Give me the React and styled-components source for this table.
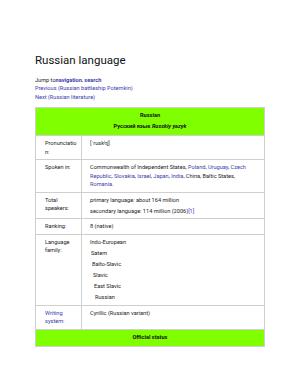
import React from 'react';
import styled, { createGlobalStyle } from 'styled-components';

const Global = createGlobalStyle`
    html, body { margin: 0; padding: 0; background: #fff; }
    body { font-family: Roboto, "Liberation Sans", sans-serif; color: #222; }
`;

const Page = styled.div`
    padding: 52px 35px 0 35px;
    width: 230px;
`;

const Title = styled.h1`
    font-size: 11.5px;
    font-weight: 400;
    line-height: 16px;
    margin: 0 0 9px 0;
    color: #111;
`;

const Small = styled.div`
    font-size: 5.6px;
    line-height: 7px;
    margin-bottom: ${p => p.$gap || 0}px;
`;

const A = styled.span`
    color: #3a3aad;
    font-weight: ${p => p.$bold ? 700 : 400};
`;

const Table = styled.div`
    margin-top: 6px;
    border: 1px solid #cfcfcf;
    font-size: 5.6px;
    line-height: 8.25px;
`;

const Head = styled.div`
    background: #80ff00;
    text-align: center;
    font-weight: 700;
    padding: 3px 4px 5px;
    display: flex;
    flex-direction: column;
    gap: 2.75px;
    color: #111;
    border-top: ${p => p.$ruled ? '1px solid #cfcfcf' : 'none'};
`;

const Row = styled.div`
    display: grid;
    grid-template-columns: 46px 1fr;
    border-top: 1px solid #cfcfcf;
`;

const Label = styled.div`
    padding: 3px 2px 3.5px 9px;
    border-right: 1px solid #cfcfcf;
    overflow-wrap: anywhere;
    color: ${p => p.$link ? '#3a3aad' : '#222'};
`;

const Value = styled.div`
    padding: 3px 8px 3.5px 8px;
    display: flex;
    flex-direction: column;
    gap: 2.75px;
`;

const Step = styled.div`
    padding-left: ${p => p.$i}px;
`;

const family = ['Indo-European', 'Satem', 'Balto-Slavic', 'Slavic', 'East Slavic', 'Russian'];

export default function App() {
    return (
        <Page>
            <Global />
            <Title>Russian language</Title>
            <Small $gap={1}>Jump to<A $bold>navigation</A>, <A $bold>search</A></Small>
            <Small $gap={2}><A>Previous (Russian battleship Potemkin)</A></Small>
            <Small><A>Next (Russian literature)</A></Small>
            <Table>
                <Head>
                    <div>Russian</div>
                    <div>Русский язык <i>Russkiy yazyk</i></div>
                </Head>
                <Row>
                    <Label>Pronunciation:</Label>
                    <Value><div>[ˈruskʲɪj]</div></Value>
                </Row>
                <Row>
                    <Label>Spoken in:</Label>
                    <Value>
                        <div>Commonwealth of Independent States, <A>Poland</A>, <A>Uruguay</A>, <A>Czech</A> <A>Republic</A>, <A>Slovakia</A>, <A>Israel</A>, <A>Japan</A>, <A>India</A>, China, Baltic States, <A>Romania</A>.</div>
                    </Value>
                </Row>
                <Row>
                    <Label>Total speakers:</Label>
                    <Value>
                        <div>primary language: about 164 million</div>
                        <div>secondary language: 114 million (2006)<A>[1]</A></div>
                    </Value>
                </Row>
                <Row>
                    <Label>Ranking:</Label>
                    <Value><div>8 (native)</div></Value>
                </Row>
                <Row>
                    <Label>Language family:</Label>
                    <Value>
                        {family.map((f, i) => <Step key={f} $i={i}>{f}</Step>)}
                    </Value>
                </Row>
                <Row>
                    <Label $link>Writing system:</Label>
                    <Value><div>Cyrillic (Russian variant)</div></Value>
                </Row>
                <Head $ruled>
                    <div>Official status</div>
                </Head>
            </Table>
        </Page>
    );
}
